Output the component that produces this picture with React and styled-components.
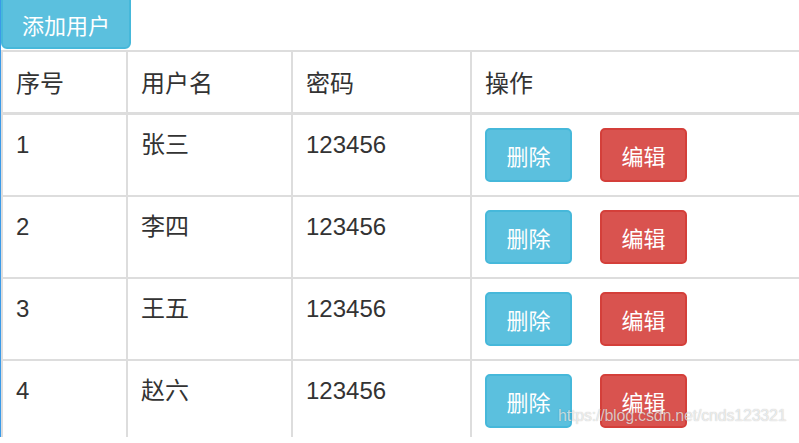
import React from "react";
import styled, { createGlobalStyle } from "styled-components";

const Global = createGlobalStyle`
  html, body { margin: 0; padding: 0; background: #fff; overflow: hidden; }
  body { font-family: "Liberation Sans", "Noto Sans CJK SC", sans-serif; color: #333; }
`;

const Page = styled.div`
  width: 1000px;
  height: 443px;
  border-left: 1px solid #3a9ae8;
  position: relative;
`;

const Btn = styled.button`
  display: inline-flex;
  align-items: center;
  justify-content: center;
  box-sizing: border-box;
  height: 54px;
  width: 87px;
  padding: 0;
  font-family: "Liberation Sans", "Noto Sans CJK SC", sans-serif;
  font-size: 22px;
  color: #fff;
  border-radius: 5px;
  border: 2px solid ${(p) => (p.$variant === "danger" ? "#d43f3a" : "#46b8da")};
  background: ${(p) => (p.$variant === "danger" ? "#d9534f" : "#5bc0de")};
  cursor: pointer;
`;

const AddBtn = styled(Btn)`
  display: flex;
  margin-top: -6px;
  height: 55px;
  width: 130px;
  border-radius: 6px;
  padding-top: 4px;
`;

const Table = styled.table`
  border-collapse: collapse;
  width: 1000px;
  margin-top: 1px;
  table-layout: fixed;
`;

const Th = styled.th`
  box-sizing: border-box;
  text-align: left;
  font-weight: normal;
  font-size: 24px;
  line-height: 34px;
  padding: 15px 13px 11px;
  border: 2px solid #ddd;
  border-bottom-width: 3px;
  vertical-align: bottom;
  width: ${(p) => (p.$w ? p.$w + "px" : "auto")};
`;

const Td = styled.td`
  font-size: 24px;
  line-height: 34px;
  padding: 13px 13px;
  border: 2px solid #ddd;
  vertical-align: top;
`;

const Actions = styled.div`
  display: flex;
  gap: 28px;
`;

const Watermark = styled.div`
  position: absolute;
  left: 557px;
  top: 413px;
  font-size: 16px;
  letter-spacing: -0.2px;
  color: rgba(255, 255, 255, 0.7);
  text-shadow: 0 0 1px rgba(0, 0, 0, 0.3);
  font-family: "Liberation Sans", sans-serif;
  pointer-events: none;
`;

const rows = [
  { id: 1, name: "张三", pwd: "123456" },
  { id: 2, name: "李四", pwd: "123456" },
  { id: 3, name: "王五", pwd: "123456" },
  { id: 4, name: "赵六", pwd: "123456" },
];

export default function App() {
  return (
    <Page>
      <Global />
      <AddBtn>添加用户</AddBtn>
      <Table>
        <thead>
          <tr>
            <Th $w={125}>序号</Th>
            <Th $w={165}>用户名</Th>
            <Th $w={179}>密码</Th>
            <Th>操作</Th>
          </tr>
        </thead>
        <tbody>
          {rows.map((r) => (
            <tr key={r.id}>
              <Td>{r.id}</Td>
              <Td>{r.name}</Td>
              <Td>{r.pwd}</Td>
              <Td>
                <Actions>
                  <Btn>删除</Btn>
                  <Btn $variant="danger">编辑</Btn>
                </Actions>
              </Td>
            </tr>
          ))}
        </tbody>
      </Table>
      <Watermark>https://blog.csdn.net/cnds123321</Watermark>
    </Page>
  );
}
